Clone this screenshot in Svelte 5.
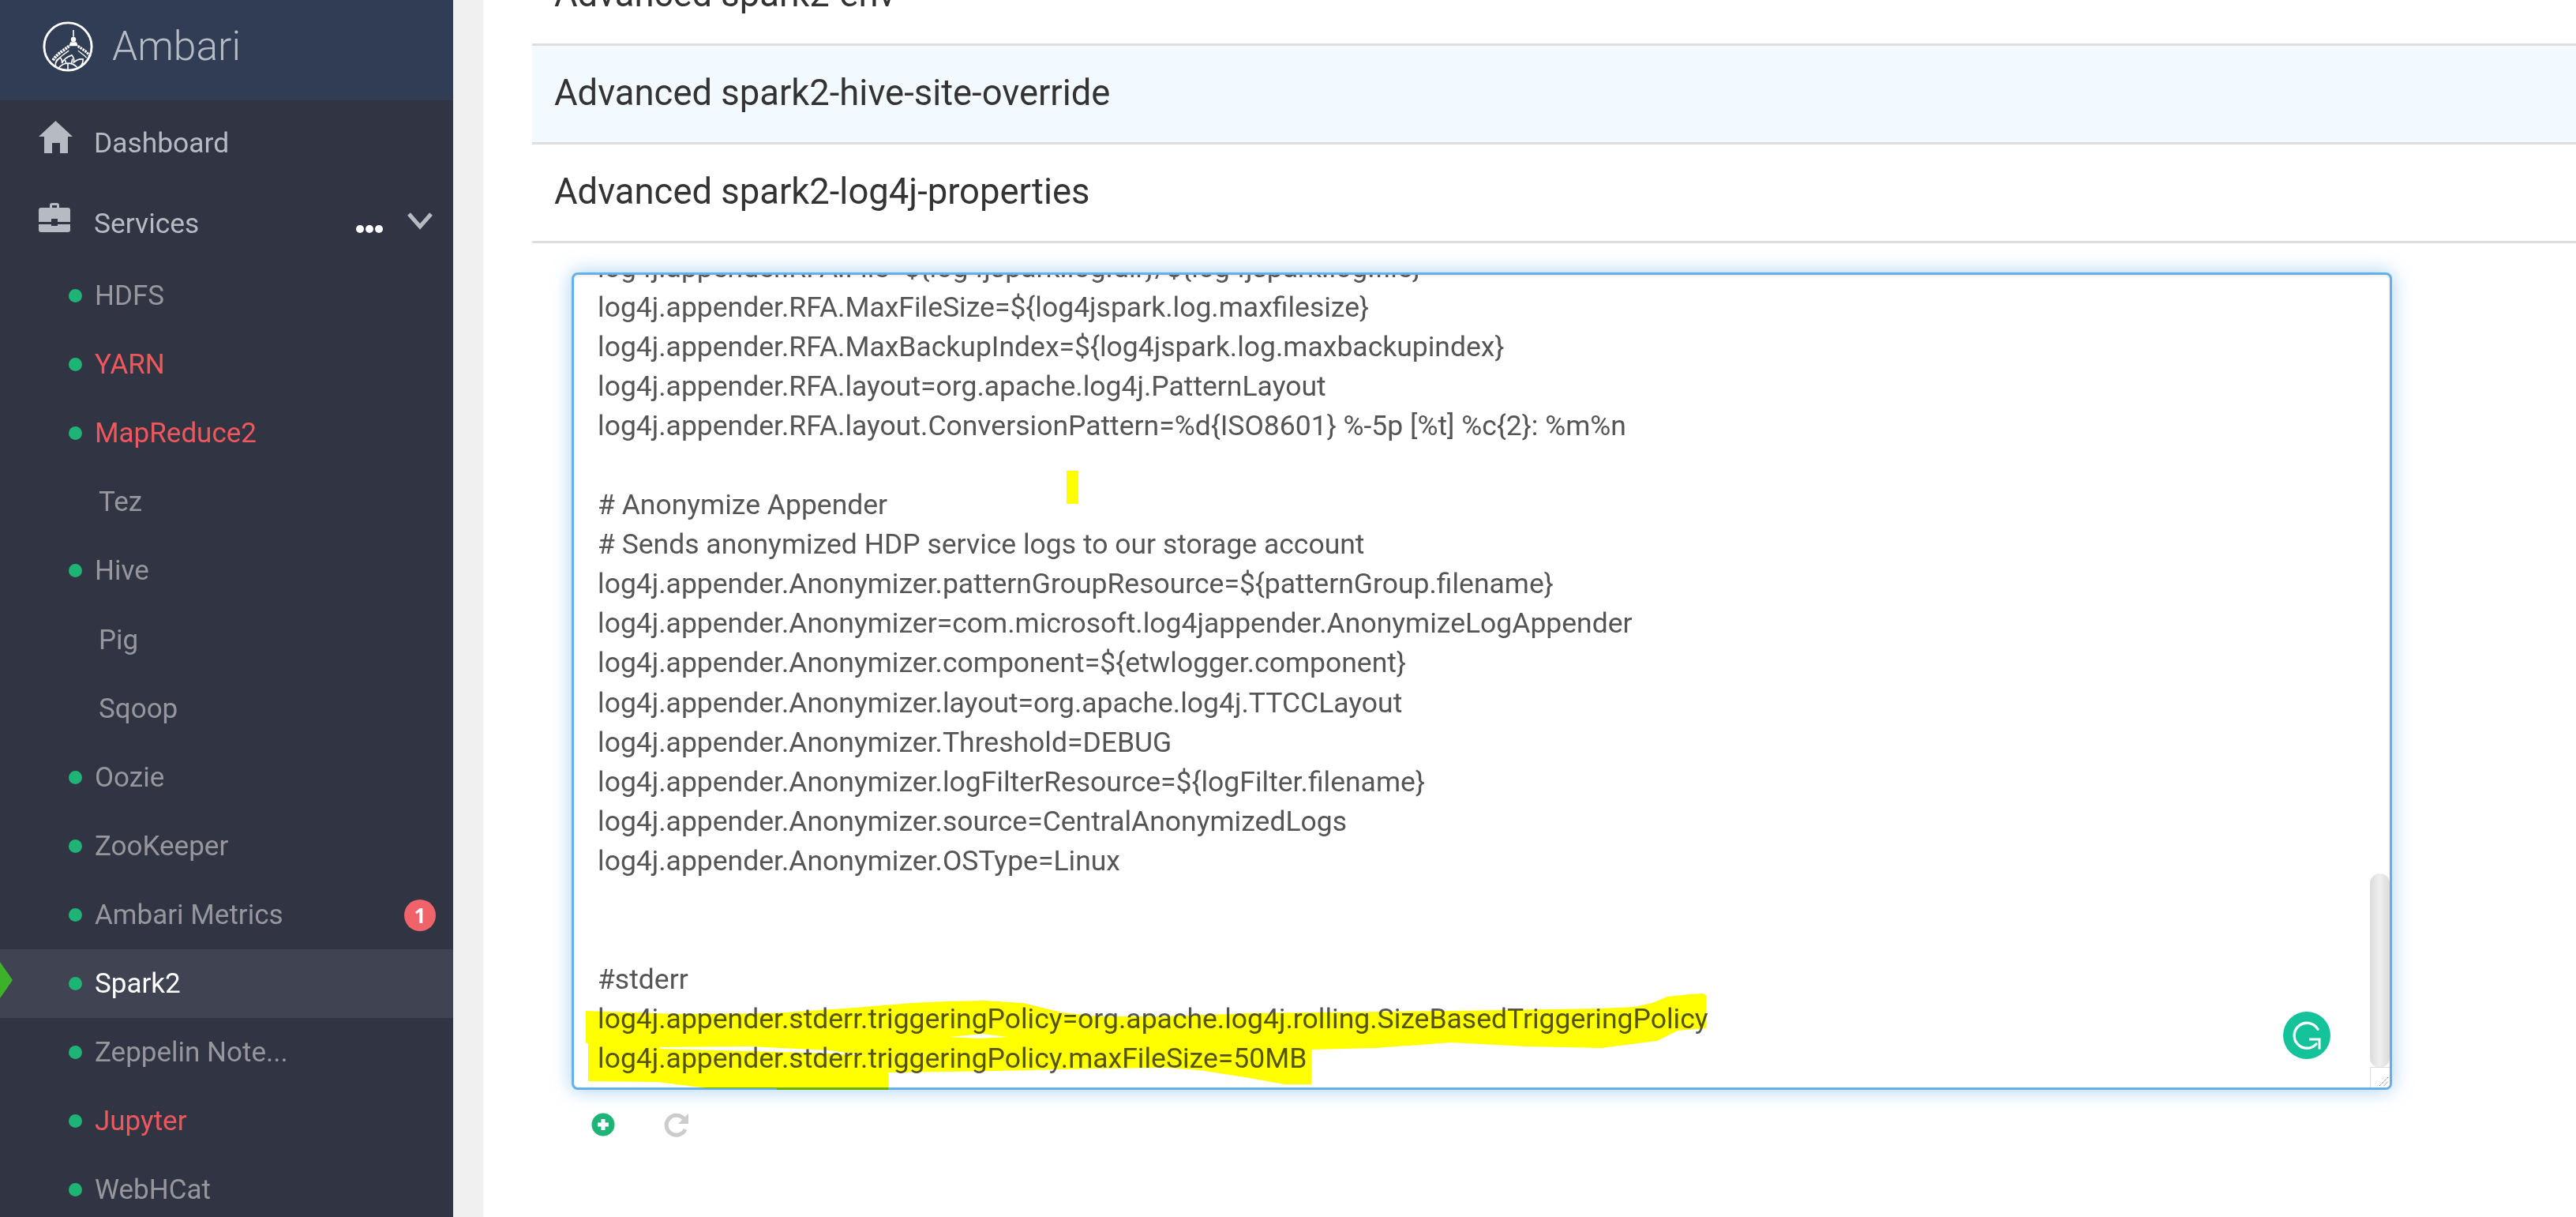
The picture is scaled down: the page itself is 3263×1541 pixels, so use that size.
<script lang="ts">
	// sidebar services, in display order
	const services = [
		{ name: 'HDFS', dot: true },
		{ name: 'YARN', dot: true, alert: true },
		{ name: 'MapReduce2', dot: true, alert: true },
		{ name: 'Tez' },
		{ name: 'Hive', dot: true },
		{ name: 'Pig' },
		{ name: 'Sqoop' },
		{ name: 'Oozie', dot: true },
		{ name: 'ZooKeeper', dot: true },
		{ name: 'Ambari Metrics', dot: true, badge: 1 },
		{ name: 'Spark2', dot: true, active: true },
		{ name: 'Zeppelin Note...', dot: true },
		{ name: 'Jupyter', dot: true, alert: true },
		{ name: 'WebHCat', dot: true }
	];

	const configLines = [
		'log4j.appender.RFA.File=${log4jspark.log.dir}/${log4jspark.log.file}',
		'log4j.appender.RFA.MaxFileSize=${log4jspark.log.maxfilesize}',
		'log4j.appender.RFA.MaxBackupIndex=${log4jspark.log.maxbackupindex}',
		'log4j.appender.RFA.layout=org.apache.log4j.PatternLayout',
		'log4j.appender.RFA.layout.ConversionPattern=%d{ISO8601} %-5p [%t] %c{2}: %m%n',
		'',
		'# Anonymize Appender',
		'# Sends anonymized HDP service logs to our storage account',
		'log4j.appender.Anonymizer.patternGroupResource=${patternGroup.filename}',
		'log4j.appender.Anonymizer=com.microsoft.log4jappender.AnonymizeLogAppender',
		'log4j.appender.Anonymizer.component=${etwlogger.component}',
		'log4j.appender.Anonymizer.layout=org.apache.log4j.TTCCLayout',
		'log4j.appender.Anonymizer.Threshold=DEBUG',
		'log4j.appender.Anonymizer.logFilterResource=${logFilter.filename}',
		'log4j.appender.Anonymizer.source=CentralAnonymizedLogs',
		'log4j.appender.Anonymizer.OSType=Linux',
		'',
		'',
		'#stderr',
		'log4j.appender.stderr.triggeringPolicy=org.apache.log4j.rolling.SizeBasedTriggeringPolicy',
		'log4j.appender.stderr.triggeringPolicy.maxFileSize=50MB'
	];
</script>

<div class="page">
	<aside class="sidebar">
		<header class="brand">
			<svg class="logo" viewBox="0 0 100 100" fill="none" stroke="#fff">
				<circle cx="50" cy="50" r="47" stroke-width="4.500" />
				<path d="M61 17v14" stroke-width="2.500" />
				<circle cx="61" cy="36" r="5" fill="#fff" stroke="none" />
				<path d="M55 41h12l3 8H52z" fill="#fff" stroke="none" />
				<path d="M52 49C42 58 28 64 20 78" stroke-width="6" stroke-dasharray="4 1.500" />
				<path d="M70 49c8 6 17 10 24 20" stroke-width="5" stroke-dasharray="4 1.500" />
				<path d="M52 58c-8 6-20 12-26 24M70 58c6 5 12 8 17 14" stroke-width="2" />
				<path d="M26 89c-2-8 3-14 9-17 3 4 4 8 3 11 3-7 11-13 20-16 4 5 5 10 3 15 5-5 12-8 19-7 0 6-2 11-6 15" stroke-width="2.500" />
				<path d="M32 92c6-7 12-9 18-9s13 2 18 8M44 76l3 8M59 74l-2 10M50 83v13" stroke-width="2.500" />
			</svg>
			<span class="brand-name">Ambari</span>
		</header>

		<nav class="menu">
			<div class="menu-item">
				<svg class="home-icon" viewBox="0 0 43 41" fill="currentColor">
					<path d="M21.5 0 43 20h-6v21H27V28H17v13H7V20H0z" />
				</svg>
				<span class="menu-label">Dashboard</span>
			</div>
			<div class="menu-item services-head">
				<svg class="case-icon" viewBox="0 0 40 37" fill="currentColor">
					<path
						fill-rule="evenodd"
						d="M14 6V3a3 3 0 0 1 3-3h6a3 3 0 0 1 3 3v3h11a3 3 0 0 1 3 3v15H24v-4h-8v4H0V9a3 3 0 0 1 3-3zm3-3v3h6V3z"
					/>
					<path d="M0 27h16v2h8v-2h16v7a3 3 0 0 1-3 3H3a3 3 0 0 1-3-3z" />
				</svg>
				<span class="menu-label">Services</span>
				<span class="more"><i></i><i></i><i></i></span>
				<svg class="chevron" viewBox="0 0 32 22" fill="none" stroke="currentColor" stroke-width="5">
					<path d="M2 2l14 16L30 2" />
				</svg>
			</div>
			{#each services as service}
				<div class="service" class:active={service.active} class:alert={service.alert} class:plain={!service.dot}>
					{#if service.active}
						<span class="marker"></span>
					{/if}
					{#if service.dot}
						<span class="dot"></span>
					{/if}
					<span>{service.name}</span>
					{#if service.badge}
						<span class="badge">{service.badge}</span>
					{/if}
				</div>
			{/each}
		</nav>
	</aside>

	<div class="gutter"></div>

	<main class="content">
		<div class="section first">Advanced spark2-env</div>
		<div class="section hovered">Advanced spark2-hive-site-override</div>
		<div class="section">Advanced spark2-log4j-properties</div>

		<div class="editor">
			<div class="lines">
				{#each configLines as line}
					<div class="line">{line}</div>
				{/each}
			</div>
			<div class="scroll-thumb"></div>
			<div class="resizer">
				<svg viewBox="0 0 14 14" fill="none" stroke="#777" stroke-width="1" stroke-dasharray="1.5 0.7">
					<path d="M1 13 13 1M7 13l6-6" />
				</svg>
			</div>
			<svg class="grammarly" viewBox="0 0 60 60">
				<circle cx="30" cy="30" r="30" fill="#15c39a" />
				<path
					d="M44 22.300A16 16 0 1 0 42 41"
					fill="none"
					stroke="#fff"
					stroke-width="3.300"
					stroke-linecap="round"
				/>
				<path d="M33 33.500h14.500v14h-3v-11H33z" fill="#fff" />
			</svg>
		</div>

		<div class="actions">
			<svg class="add" viewBox="0 0 30 30">
				<circle cx="15" cy="15" r="14.500" fill="#1eb475" />
				<path d="M15 8v14M8 15h14" stroke="#fff" stroke-width="5" />
			</svg>
			<svg class="undo" viewBox="0 0 32 32" fill="none">
				<path d="M25.500 9A12.500 12.500 0 1 0 27 22" stroke="#ccc" stroke-width="5" />
				<path d="M31 2v13H18z" fill="#ccc" />
			</svg>
		</div>
	</main>

	<!-- highlighter marks drawn over the screenshot -->
	<svg class="marks" viewBox="0 0 3263 1541" fill="#ff0">
		<rect x="1351" y="596" width="15" height="42" />
		<path
			fill-rule="evenodd"
			d="M742 1280L860 1284 980 1283 1070 1277 1156 1270 1200 1268 1247 1267 1296 1270 1345 1282 1391 1287 1472 1287 1583 1283 1838 1280 2029 1277 2070 1275 2093 1270 2112 1262 2140 1259 2157 1258 2161 1260 2161 1302 2125 1305 2099 1318 2029 1327 1933 1325 1838 1320 1742 1327 1661 1329 1661 1373 1627 1373 1583 1365 1519 1355 1480 1352 1391 1353 1264 1356 1200 1357 1125 1358 1125 1380 984 1380 984 1378 896 1378 833 1370 745 1369 745 1322 742 1320Z
			M835 1326 950 1325 1050 1330 1100 1337 1050 1334 950 1331 835 1328Z
			M1203 1313 1245 1309 1276 1313 1240 1315Z"
		/>
	</svg>
</div>

<style>
	:global(body) {
		margin: 0;
		background: #fff;
	}

	.page {
		position: relative;
		display: flex;
		width: 3263px;
		height: 1541px;
		overflow: hidden;
		font-family: Roboto, 'Liberation Sans', sans-serif;
	}

	/* Sidebar */
	.sidebar {
		flex: 0 0 574px;
		background: #313543;
		color: #b6bac3;
	}

	.brand {
		display: flex;
		align-items: center;
		gap: 24px;
		height: 127px;
		padding: 0 0 10px 54px;
		box-sizing: border-box;
		background: #303d54;
	}

	.logo {
		width: 64px;
		height: 64px;
	}

	.brand-name {
		font-size: 51.500px;
		font-weight: 300;
	}

	.menu-item {
		display: flex;
		align-items: center;
		height: 102px;
		font-size: 35.400px;
	}

	.menu-label {
		margin-top: 6px;
	}

	.home-icon {
		width: 43px;
		height: 41px;
		margin: -10px 27px 0 49px;
	}

	.case-icon {
		width: 40px;
		height: 37px;
		margin: -10px 30px 0 49px;
	}

	.more {
		display: flex;
		gap: 2px;
		margin: 20px 31px 0 auto;
	}

	.more i {
		width: 10px;
		height: 10px;
		border-radius: 50%;
		background: #fff;
	}

	.chevron {
		width: 32px;
		height: 22px;
		margin: 0 26px 0 0;
	}

	.service {
		position: relative;
		display: flex;
		align-items: center;
		height: 87.100px;
		padding-left: 87px;
		font-size: 35px;
		color: #96979c;
		box-sizing: border-box;
	}

	.service.plain {
		padding-left: 125px;
	}

	.service.alert {
		color: #f0575d;
	}

	.service.active {
		background: #404351;
		color: #fff;
	}

	.dot {
		width: 17px;
		height: 17px;
		margin-right: 16px;
		border-radius: 50%;
		background: #1eb475;
	}

	.marker {
		position: absolute;
		left: 0;
		top: 16px;
		width: 16px;
		height: 46px;
		background: #3cb22b;
		clip-path: polygon(0 0, 100% 50%, 0 100%);
	}

	.badge {
		position: absolute;
		right: 22px;
		top: 24px;
		width: 40px;
		height: 40px;
		border-radius: 50%;
		background: #f0636a;
		color: #fff;
		font-family: 'Open Sans', sans-serif;
		font-size: 26px;
		font-weight: 700;
		line-height: 40px;
		text-align: center;
	}

	.gutter {
		flex: 0 0 38px;
		background: #f0f0f0;
	}

	/* Config sections */
	.content {
		flex: 1;
		min-width: 0;
		padding-left: 62px;
	}

	.section {
		display: flex;
		align-items: center;
		height: 125px;
		padding: 0 0 4px 28px;
		box-sizing: border-box;
		border-bottom: 3px solid #dedede;
		font-size: 45.400px;
		color: #333;
	}

	.section.first {
		margin-top: -67px;
	}

	.section.hovered {
		background: #f2f9ff;
	}

	/* Textarea look-alike */
	.editor {
		position: relative;
		width: 2306px;
		height: 1035px;
		margin: 37px 0 0 50px;
		box-sizing: border-box;
		border: 3px solid #66afe9;
		border-radius: 8px;
		overflow: hidden;
		box-shadow:
			inset 0 2px 4px rgba(0, 0, 0, 0.075),
			0 0 24px rgba(102, 175, 233, 0.6);
		background: #fff;
	}

	.lines {
		margin-top: -34px;
		padding-left: 30px;
		font-size: 35.500px;
		line-height: 50.050px;
		color: #555;
	}

	.line {
		height: 50.050px;
		white-space: pre;
	}

	.scroll-thumb {
		position: absolute;
		right: 0;
		top: 758px;
		width: 25px;
		height: 246px;
		border-radius: 13px;
		background: linear-gradient(90deg, #dcdcdc, #efefef 50%, #dcdcdc);
	}

	.resizer {
		position: absolute;
		right: 0;
		bottom: 0;
		width: 25px;
		height: 26px;
		box-sizing: border-box;
		border: 1px solid #ddd;
		border-width: 1px 0 0 1px;
		background: #fff;
	}

	.resizer svg {
		position: absolute;
		right: 1px;
		bottom: 1px;
		width: 13px;
		height: 13px;
	}

	.grammarly {
		position: absolute;
		right: 75px;
		bottom: 36px;
		width: 60px;
		height: 60px;
	}

	.actions {
		display: flex;
		align-items: center;
		gap: 62px;
		margin: 28px 0 0 75px;
	}

	.add {
		width: 30px;
		height: 30px;
	}

	.undo {
		width: 32px;
		height: 32px;
	}

	.marks {
		position: absolute;
		inset: 0;
		width: 3263px;
		height: 1541px;
		mix-blend-mode: multiply;
		pointer-events: none;
	}
</style>
